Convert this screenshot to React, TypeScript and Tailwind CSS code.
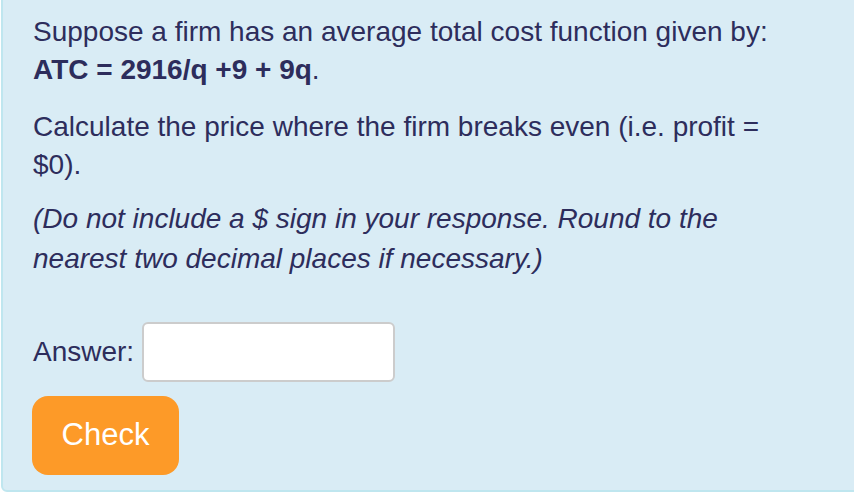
const App = () => {
  return (
    <div className="h-[494px] w-[854px] overflow-hidden bg-white font-['Liberation_Sans',Arial,sans-serif] text-[#2d2d5c]">
      <div className="-mt-[12px] ml-px h-[504px] w-[870px] rounded-b-[6px] border-2 border-[#bfe6ef] bg-[#d9ecf5] pl-[30px] pt-[23px]">
        <p className="text-[28px] leading-[38px]">
          Suppose a firm has an average total cost function given by:
          <br />
          <b>ATC = 2916/q +9 + 9q</b>.
        </p>
        <p className="mt-[19px] w-[740px] text-[28px] leading-[38px]">
          Calculate the price where the firm breaks even (i.e. profit = $0).
        </p>
        <p className="mt-[15px] w-[720px] text-[28px] italic leading-[40px]">
          (Do not include a $ sign in your response. Round to the nearest two
          decimal places if necessary.)
        </p>
        <div className="mt-[43px] flex items-center gap-[8px]">
          <span className="text-[28px]">Answer:</span>
          <input
            type="text"
            className="h-[60px] w-[253px] rounded-[6px] border-2 border-[#cccccc] bg-white"
          />
        </div>
        <button className="mt-[14px] -ml-px h-[79px] w-[147px] rounded-[16px] bg-[#fd9a28] text-[31px] text-white">
          Check
        </button>
      </div>
    </div>
  );
};

export default App;
